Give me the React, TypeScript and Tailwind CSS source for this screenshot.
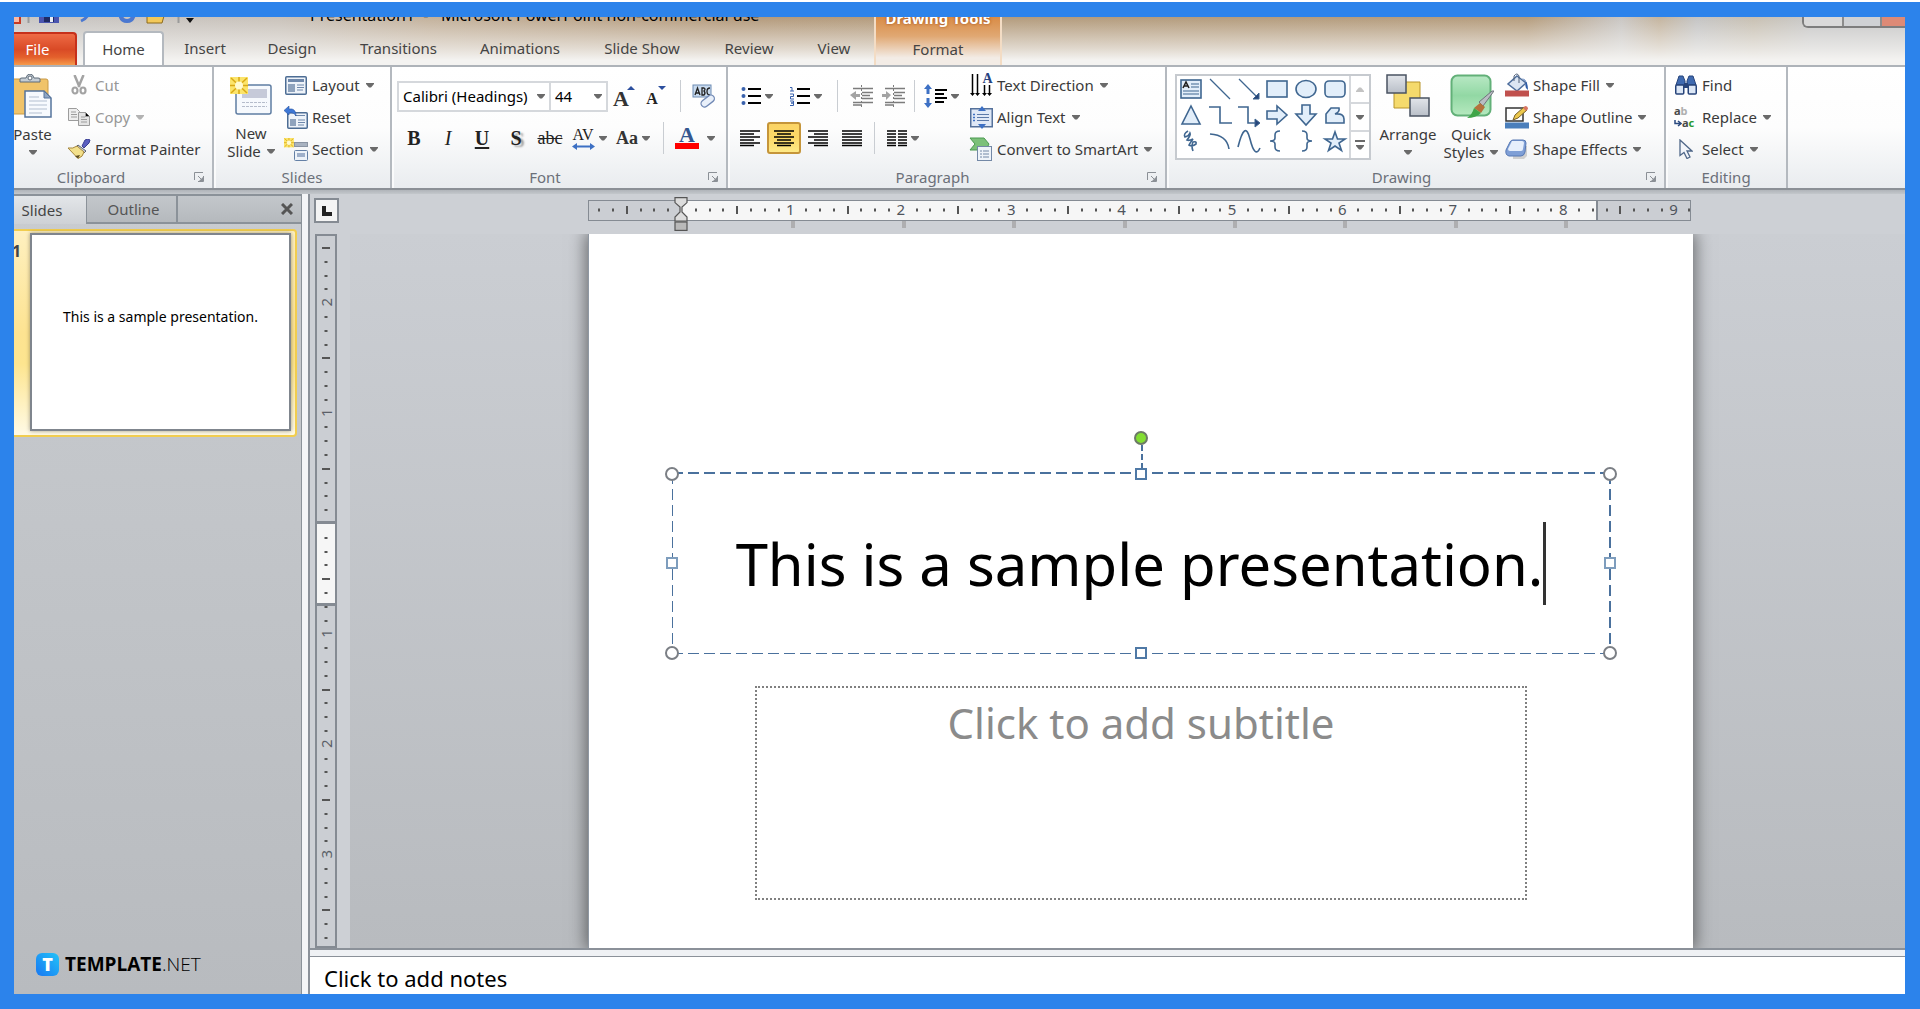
import { clsx } from 'clsx';
import type { ReactNode } from 'react';

const tabs = [
  { label: 'Insert', width: 'w-[82px]' },
  { label: 'Design', width: 'w-[92px]' },
  { label: 'Transitions', width: 'w-[121px]' },
  { label: 'Animations', width: 'w-[122px]' },
  { label: 'Slide Show', width: 'w-[122px]' },
  { label: 'Review', width: 'w-[92px]' },
  { label: 'View', width: 'w-[78px]' },
];

function Caret({ className }: { className?: string }) {
  return (
    <svg
      viewBox="0 0 8 5"
      className={clsx('h-[5px] w-2 shrink-0 fill-[#6a6a6a]', className)}
    >
      <path d="M0 0h8v1L5 4.5H3L0 1z" />
    </svg>
  );
}

function Divider({ className }: { className?: string }) {
  return (
    <div className={clsx('flex h-8 shrink-0 justify-center', className)}>
      <div className="w-px bg-[#c9cdd2]" />
    </div>
  );
}

function Group({
  label,
  width,
  launcher,
  children,
}: {
  label: string;
  width: string;
  launcher?: boolean;
  children: ReactNode;
}) {
  return (
    <section
      className={clsx(
        'flex shrink-0 flex-col border-r-2 border-[#b4b9bf] shadow-[inset_2px_0_0_#ffffffb0]',
        width
      )}
    >
      <div className="flex h-[100px]">{children}</div>
      <div className="flex h-5 items-center text-[#6b7079]">
        <h2 className="flex-1 text-center">{label}</h2>
        {launcher && (
          <button aria-label={`${label} options`} className="w-7 pl-2.5">
            <svg viewBox="0 0 10 10" className="size-[10px]" fill="none">
              <path d="M.5 8V.5H9" stroke="#8b9096" />
              <path d="M4 9.500h5.500V4M4 4l5 5" stroke="#8b9096" />
              <path d="M5 9h4V5z" fill="#8b9096" />
            </svg>
          </button>
        )}
      </div>
    </section>
  );
}

function Command({
  icon,
  label,
  caret,
  disabled,
}: {
  icon: ReactNode;
  label: string;
  caret?: boolean;
  disabled?: boolean;
}) {
  return (
    <button
      disabled={disabled}
      className={clsx(
        'flex h-8 items-center whitespace-nowrap',
        disabled ? 'text-[#979797]' : 'text-[#3a3a3a]'
      )}
    >
      <span className="mr-1 flex w-6 justify-center">{icon}</span>
      {label}
      {caret && (
        <Caret className={clsx('ml-1.5', disabled && 'opacity-50')} />
      )}
    </button>
  );
}

function ToolButton({
  label,
  width,
  caret,
  active,
  children,
}: {
  label: string;
  width: string;
  caret?: boolean;
  active?: boolean;
  children: ReactNode;
}) {
  return (
    <button
      aria-label={label}
      className={clsx(
        'flex h-8 shrink-0 items-center justify-center gap-1',
        width,
        active &&
          'rounded-[3px] border-2 border-[#c5953a] bg-[linear-gradient(#fbd465,#fdd968_50%,#fee987)]'
      )}
    >
      {children}
      {caret && <Caret />}
    </button>
  );
}

/* ---------- clipboard / slides icons ---------- */

function PasteIcon() {
  return (
    <svg viewBox="0 0 42 46" className="h-[46px] w-[42px]">
      <rect x="0" y="5" width="36" height="35" rx="2" fill="#f0c36a" stroke="#c99a46" />
      <path d="M8 8V5q0-1 2-1h4q1-4 4-4t4 4h4q2 0 2 1v3z" fill="#c4ccd4" stroke="#5c6a78" />
      <circle cx="18" cy="4" r="2" fill="#fff" stroke="#5c6a78" />
      <path d="M13 17h19l7 7v19H13z" fill="#f7fafe" stroke="#56749c" strokeWidth="1.500" />
      <path d="M32 17v7h7z" fill="#8fa6c4" stroke="#56749c" />
      <path d="M17 23h10M17 27h18M17 31h18M17 35h18M17 39h13" stroke="#b3bfd0" />
    </svg>
  );
}

function CutIcon() {
  return (
    <svg viewBox="0 0 16 20" className="h-5 w-4" fill="none" stroke="#a3a3a3">
      <path d="M3.500 0l5 12M12.500 0l-5 12" strokeWidth="2.500" />
      <ellipse cx="4" cy="15.500" rx="2.500" ry="3" strokeWidth="2.200" />
      <ellipse cx="12" cy="15.500" rx="2.500" ry="3" strokeWidth="2.200" />
    </svg>
  );
}

function CopyIcon() {
  return (
    <svg viewBox="0 0 22 18" className="h-[18px] w-[22px]" stroke="#9c9c9c">
      <path d="M.5.5h8l3 3v9h-11z" fill="#eeeeee" />
      <path d="M3 4h5M3 6.500h6M3 9h6" />
      <path d="M10.500 4.500h7l4 4v9h-11z" fill="#e4e4e4" />
      <path d="M13 9h4M13 11.500h6M13 14h6M17.500 4.500v4h4" />
    </svg>
  );
}

function PainterIcon() {
  return (
    <svg viewBox="0 0 24 20" className="h-5 w-6">
      <path d="M15 7l3-6q3-2 5 0l-1 3-5 5z" fill="#5b5fc0" stroke="#3b3f92" />
      <path d="M11 6l8 6-2 2-8-6z" fill="#c7cbd2" stroke="#5d6470" />
      <path d="M10 7l7 6q-1 5-6 6.500L1 9q5 1 9-2z" fill="#f3e08b" stroke="#a5863a" />
      <path d="M13 16l-2 3.500-3-2.500z" fill="#5b4a21" />
    </svg>
  );
}

function Sparkle() {
  return (
    <g>
      <rect width="18" height="17" fill="#fbe46b" />
      <path
        d="M9 0v17M0 8.500h18M1 1l16 15M17 1L1 16"
        stroke="#d9a916"
        strokeWidth="1.500"
      />
      <circle cx="9" cy="8.500" r="4" fill="#fffad0" />
    </g>
  );
}

function NewSlideIcon() {
  return (
    <svg viewBox="0 0 43 38" className="h-[38px] w-[43px]">
      <rect x="6" y="8" width="35" height="29" rx="2" fill="#f6f9fd" stroke="#5f7da2" strokeWidth="1.500" />
      <rect x="12" y="12" width="25" height="9" fill="#c6cad9" />
      <path d="M12 25.500h25M12 29.500h25" stroke="#b5bccb" strokeDasharray="3 1" />
      <Sparkle />
    </svg>
  );
}

function LayoutIcon() {
  return (
    <svg viewBox="0 0 22 19" className="h-[19px] w-[22px]">
      <rect x=".75" y=".75" width="20.500" height="17.500" rx="1" fill="#eef3f9" stroke="#4d6d94" strokeWidth="1.500" />
      <rect x="3" y="3" width="16" height="3" fill="#6f88ab" />
      <rect x="3" y="8" width="7" height="8" fill="#8fa3bd" />
      <path d="M12 9h7M12 11.500h7M12 14h6" stroke="#6f88ab" />
    </svg>
  );
}

function ResetIcon() {
  return (
    <svg viewBox="0 0 24 23" className="h-[23px] w-6">
      <rect x="3.750" y="6.750" width="19.500" height="15.500" rx="1" fill="#eef3f9" stroke="#4d6d94" strokeWidth="1.500" />
      <rect x="6" y="13" width="6" height="7" fill="#8fa3bd" />
      <path d="M14 14h7M14 16.500h7M14 19h6M11 9.500h10" stroke="#6f88ab" />
      <path d="M5 0v3h3q4 1 4 7-2-4-7-3v2L0 4.500z" fill="#3d77d6" stroke="#2a55a3" strokeWidth=".6" />
    </svg>
  );
}

function SectionIcon() {
  return (
    <svg viewBox="0 0 24 23" className="h-[23px] w-6">
      <g transform="scale(.55)">
        <Sparkle />
      </g>
      <rect x="10.500" y="4.500" width="13" height="4" fill="#a8b2c0" stroke="#8a94a3" />
      <rect x="10.500" y="12.500" width="13" height="10" rx="1" fill="#eef3f9" stroke="#6480a6" />
      <rect x="13" y="15" width="8" height="4" fill="#9fb0ca" />
    </svg>
  );
}

/* ---------- paragraph icons ---------- */

function BulletsIcon() {
  return (
    <svg viewBox="0 0 20 20" className="size-5">
      <g fill="#3a62ad">
        <circle cx="2.500" cy="3" r="2" />
        <circle cx="2.500" cy="10" r="2" />
        <circle cx="2.500" cy="17" r="2" />
      </g>
      <path d="M7 3h13M7 10h13M7 17h13" stroke="#000" strokeWidth="2" />
    </svg>
  );
}

function NumberingIcon() {
  return (
    <svg viewBox="0 0 21 20" className="h-5 w-[21px]" fill="none">
      <path
        d="M1 1.500h2V5M1 5h4M1 8h3.500v2.500H1.500V13H5M1 15h3.500v2H2h2.500v2.500H1"
        stroke="#3a62ad"
      />
      <path d="M8 3h13M8 10h13M8 17h13" stroke="#000" strokeWidth="2" />
    </svg>
  );
}

function IndentIcon({ dir }: { dir: 'left' | 'right' }) {
  return (
    <svg viewBox="0 0 23 22" className="h-[22px] w-[23px]">
      <path
        d="M3 3.500h20M12 7.500h11M12 10.500h8M12 13.500h11M3 17.500h20M3 20h9"
        stroke="#7c7c7c"
        strokeWidth="1.500"
      />
      <path d="M11.500 0v22" stroke="#7c7c7c" strokeDasharray="2 2" />
      {dir === 'left' ? (
        <path d="M0 10l6-4v3h4v3H6v3z" fill="#a3a3a3" />
      ) : (
        <path d="M9 10L4 6v3H0v3h4v3z" fill="#a3a3a3" />
      )}
    </svg>
  );
}

function LineSpacingIcon() {
  return (
    <svg viewBox="0 0 23 24" className="h-6 w-[23px]">
      <path d="M4 0l4 5H5.500v5h-3V5H0zM4 24l4-5H5.500v-5h-3v5H0z" fill="#3d70c4" />
      <path d="M11 6h12M11 10h9M11 14h12M11 18h9" stroke="#000" strokeWidth="2" />
    </svg>
  );
}

const alignPaths = {
  left: 'M0 1h20M0 4h14M0 7h20M0 10h14M0 13h20M0 15.500h14',
  center: 'M0 1h20M3 4h14M0 7h20M3 10h14M0 13h20M3 15.500h14',
  right: 'M0 1h20M6 4h14M0 7h20M6 10h14M0 13h20M6 15.500h14',
  justify: 'M0 1h20M0 4h20M0 7h20M0 10h20M0 13h20M0 15.500h20',
  columns:
    'M0 1h9M0 4h9M0 7h9M0 10h9M0 13h9M0 15.500h9M11 1h9M11 4h9M11 7h9M11 10h9M11 13h9M11 15.500h9',
};

function AlignIcon({ type }: { type: keyof typeof alignPaths }) {
  return (
    <svg viewBox="0 0 20 17" className="h-[17px] w-5 shrink-0">
      <path d={alignPaths[type]} stroke="#000" strokeWidth="1.600" />
    </svg>
  );
}

function TextDirectionIcon() {
  return (
    <span className="relative">
      <svg viewBox="0 0 23 23" className="h-[23px] w-[23px]" stroke="#000">
        <path d="M2.500 0v20M7.500 0v20M14.500 11v9M19.500 11v9" strokeWidth="1.500" />
        <path d="M0 19h5l-2.500 3zM5 19h5l-2.500 3zM12 19h5l-2.500 3zM17 19h5l-2.500 3z" strokeWidth="0" />
      </svg>
      <span className="absolute -top-px right-0 font-[Liberation_Serif,serif] text-sm/3 font-bold text-[#27427f]">
        A
      </span>
    </span>
  );
}

function AlignTextIcon() {
  return (
    <svg viewBox="0 0 23 23" className="h-[23px] w-[23px]">
      <rect x=".75" y="2.750" width="21.500" height="18" fill="#dfe8f6" stroke="#55719b" strokeWidth="1.500" />
      <path d="M3 8.500h2M3 11.500h2M3 14.500h2" stroke="#3d70c4" strokeWidth="1.500" />
      <path d="M7 8.500h12M7 11.500h12M7 14.500h12" stroke="#5b79a8" />
      <path d="M12 0l4 5H8zM12 23l4-5H8z" fill="#3d70c4" />
    </svg>
  );
}

function SmartArtIcon() {
  return (
    <svg viewBox="0 0 24 24" className="size-6">
      <path d="M1 1h14l5 6-3 6H1l5-6z" fill="#7cc07a" stroke="#4b9a50" />
      <rect x="8.500" y="9.500" width="14" height="14" fill="#eef3f9" stroke="#7388a6" />
      <path d="M11 14h2M11 17h2M11 20h2M14 14h6M14 17h6M14 20h6" stroke="#7388a6" />
    </svg>
  );
}

/* ---------- drawing icons ---------- */

const shapes = [
  {
    label: 'Text Box',
    art: (
      <>
        <rect x="1" y="1" width="20" height="18" />
        <path d="M11 5h8M11 8h8M3 12h16M3 15h16" strokeWidth="1" />
        <path d="M3 9l3-6 3 6M4 7h4" stroke="#222" />
      </>
    ),
  },
  { label: 'Line', art: <path d="M1 0l20 20" strokeWidth="1.200" /> },
  {
    label: 'Arrow',
    art: (
      <>
        <path d="M1 0l18 18" strokeWidth="1.200" />
        <path d="M21 14v6h-6z" fill="#26457a" strokeWidth="1" />
      </>
    ),
  },
  { label: 'Rectangle', art: <rect x="1" y="2" width="20" height="16" /> },
  { label: 'Oval', art: <ellipse cx="11" cy="10" rx="10" ry="8.500" /> },
  { label: 'Rounded', art: <rect x="1" y="2" width="20" height="16" rx="4" /> },
  { label: 'Triangle', art: <path d="M11 1l9 18H2z" /> },
  { label: 'Elbow', art: <path d="M0 2h11v16h12" fill="none" /> },
  {
    label: 'Elbow Arrow',
    art: (
      <>
        <path d="M0 2h10v16h8" fill="none" />
        <path d="M17 14l5 4-5 4z" fill="#26457a" strokeWidth="1" />
      </>
    ),
  },
  { label: 'Right Arrow', art: <path d="M1 6h10V1l10 9-10 9v-5H1z" /> },
  { label: 'Down Arrow', art: <path d="M7 0h8v9h6l-10 11L1 9h6z" /> },
  {
    label: 'Freeform',
    art: <path d="M2 18V9l5-6h8q1 4-4 6 9-1 9 5v4z" />,
  },
  {
    label: 'Scribble',
    art: (
      <path
        d="M8 0q-5 3-3 6 4-1 5-4 1 2-3 7 2 1 6-1-3 4-4 6 3 2 7-1 1-3-3-2-2 4 0 9"
        fill="none"
      />
    ),
  },
  { label: 'Arc', art: <path d="M1 3q17 1 19 15" fill="none" /> },
  {
    label: 'Curve',
    art: <path d="M0 16Q7-12 12 8t10 9" fill="none" />,
  },
  {
    label: 'Left Brace',
    art: <path d="M14 0q-5 0-5 4v3q0 3-5 3 5 0 5 3v3q0 4 5 4" fill="none" />,
  },
  {
    label: 'Right Brace',
    art: <path d="M7 0q5 0 5 4v3q0 3 5 3-5 0-5 3v3q0 4-5 4" fill="none" />,
  },
  {
    label: 'Star',
    art: <path d="M11 1l2.500 7H21l-6 4 2.500 7.500L11 15l-6.500 4.500L7 12 1 8h7.500z" />,
  },
];

function ArrangeIcon() {
  return (
    <svg viewBox="0 0 45 44" className="h-11 w-[45px]">
      <defs>
        <linearGradient id="tile" x2="0" y2="1">
          <stop stopColor="#e2e5ea" />
          <stop offset="1" stopColor="#b9bfc8" />
        </linearGradient>
      </defs>
      <path d="M8 8h26v26H8z" fill="#f5da6c" stroke="#b8942b" />
      <rect x="1" y="1" width="19" height="18" fill="url(#tile)" stroke="#4a5362" strokeWidth="1.500" />
      <rect x="24" y="24" width="19" height="18" fill="url(#tile)" stroke="#4a5362" strokeWidth="1.500" />
    </svg>
  );
}

function QuickStylesIcon() {
  return (
    <svg viewBox="0 0 45 44" className="h-11 w-[45px]">
      <defs>
        <linearGradient id="green" x2="0" y2="1">
          <stop stopColor="#b8e8c4" />
          <stop offset=".5" stopColor="#92d8a4" />
          <stop offset="1" stopColor="#b6e9bf" />
        </linearGradient>
      </defs>
      <rect x="2.500" y="1.500" width="39" height="40" rx="6" fill="url(#green)" stroke="#62b078" strokeWidth="2" />
      <path d="M45 17L34 32l-4-4L43 17z" fill="#b9bdc3" stroke="#6f747c" />
      <path d="M31 29l5 4-4 6-7-5z" fill="#b5713c" />
      <path d="M25 34l7 5q-5 5-14 5 5-3 7-10z" fill="#3fa548" />
    </svg>
  );
}

function FillIcon() {
  return (
    <svg viewBox="0 0 24 24" className="size-6">
      <path d="M12 3l9 7-9 8-9-7z" fill="#dbe5f3" stroke="#4d6d9c" strokeWidth="1.500" />
      <path d="M9 8V3q3-4 5 0v7" fill="none" stroke="#53627a" />
      <path d="M17 5q6 2 6 12-4-2-2-8z" fill="#2c5ba8" />
      <rect y="17.500" width="24" height="6" fill="#c0504d" />
    </svg>
  );
}

function OutlineIcon() {
  return (
    <svg viewBox="0 0 24 24" className="size-6">
      <path d="M1 3h17v13H1z" fill="#fff" stroke="#333" strokeWidth="1.500" />
      <path d="M8 15l2-5 9-8 3 3-9 8z" fill="#ecc84c" stroke="#77602a" />
      <path d="M18 3l2-2q3 0 3 3l-2 2z" fill="#d77463" />
      <rect y="17.500" width="24" height="6" fill="#4a7ebb" />
    </svg>
  );
}

function EffectsIcon() {
  return (
    <svg viewBox="0 0 24 20" className="h-5 w-6">
      <path d="M8 7h14v10l-3 3H8z" fill="#cfcfcf" />
      <path d="M5 3q1-2 3-2h10q3 0 3 3l-1 9q-1 4-4 4H4q-4-1-3-6z" fill="#7f9fd6" stroke="#5678b4" />
      <path d="M7 2h10q2 0 2 2l-1 6q0 2-2 2H5q-2 0-2-2z" fill="#e6effc" />
    </svg>
  );
}

/* ---------- editing icons ---------- */

function FindIcon() {
  return (
    <svg viewBox="0 0 22 20" className="h-5 w-[22px]">
      <path d="M4 1h4l2 5v4H1zM14 1h4l3 9h-9V6z" fill="#3f6ab0" stroke="#27447a" />
      <rect x=".75" y="10" width="8" height="9" rx="1" fill="#dce7f6" stroke="#27447a" strokeWidth="1.500" />
      <rect x="13.250" y="10" width="8" height="9" rx="1" fill="#dce7f6" stroke="#27447a" strokeWidth="1.500" />
      <path d="M9 8h4v5H9z" fill="#27447a" />
    </svg>
  );
}

function ReplaceIcon() {
  return (
    <span className="flex w-6 flex-col text-[11px]/[12px] font-bold">
      <span className="flex">
        <span className="text-[#4a4a4a]">a</span>
        <span className="text-[#b0b0b0]">b</span>
      </span>
      <span className="flex items-center">
        <svg viewBox="0 0 8 7" className="h-[7px] w-2 shrink-0" fill="none" stroke="#2b4a80">
          <path d="M1 0v3.500h5M4 1l3 2.500L4 6" strokeWidth="1.500" />
        </svg>
        <span className="text-[#4a4a4a]">a</span>
        <span className="text-[#2a9a34]">c</span>
      </span>
    </span>
  );
}

function SelectIcon() {
  return (
    <svg viewBox="0 0 14 20" className="h-5 w-[14px]">
      <path d="M1 1l12 11H8l3 6-3 1.500-3-6-4 3z" fill="#f2f5fa" stroke="#4f6788" strokeWidth="1.300" />
    </svg>
  );
}

/* ---------- rulers ---------- */

const INCH = 110.4;

function tickLength(k: number) {
  if (k % 8 === 0) return 0;
  return k % 4 === 0 ? 8 : 3;
}

function HorizontalRuler() {
  const zero = 93;
  const ticks = Array.from({ length: 80 }, (_, i) => i - 6);
  return (
    <div className="relative flex h-[21px] min-w-0 flex-1 border border-[#858b93] bg-[#cbced3]">
      <div className="w-[92px] shrink-0 border-r border-[#858b93]" />
      <div className="flex-1 bg-[#f6f6f6]" />
      <div className="w-[94px] shrink-0 border-l-2 border-[#858b93]" />
      <svg className="absolute inset-x-0 top-0 h-7 w-full">
        {ticks.map((k) => {
          const len = tickLength(k);
          const x = Math.round(zero + (k * INCH) / 8);
          return (
            len > 0 && (
              <rect key={k} x={x - 1} y={9 - len / 2} width="2" height={len} fill="#555" />
            )
          );
        })}
        {[1, 2, 3, 4, 5, 6, 7, 8, 9].map((n) => (
          <g key={n}>
            <text x={zero + n * INCH - 2} y="14" textAnchor="middle" fontSize="15" fill="#4f545c">
              {n}
            </text>
            {n < 9 && (
              <rect x={Math.round(zero + n * INCH) - 1} y="20" width="4" height="7" fill="#aeaeb0" />
            )}
          </g>
        ))}
      </svg>
      <svg viewBox="0 0 14 34" className="absolute -top-1 left-[85px] h-[34px] w-[14px]">
        <g fill="#dcdcdc" stroke="#555" strokeWidth="1.200">
          <path d="M1 .6h12v5L8 10v5l5 5v4H1v-4l5-5v-5L1 5.600z" />
          <rect x="1" y="25" width="12" height="8.400" fill="#b9b9b9" />
        </g>
      </svg>
    </div>
  );
}

function VerticalRuler() {
  const zero = 289;
  const ticks = Array.from({ length: 51 }, (_, i) => i - 20);
  return (
    <div className="relative w-[22px] overflow-hidden border-2 border-[#858b93] bg-[#cbced3]">
      <svg className="absolute inset-0 h-full w-full">
        <rect y={zero - 2} width="22" height="82" fill="#f6f6f6" />
        <rect y={zero - 4} width="22" height="3" fill="#858b93" />
        <rect y={zero + 78} width="22" height="3" fill="#858b93" />
        {ticks.map((k) => {
          const len = tickLength(k);
          const y = Math.round(zero + (k * INCH) / 8) - 2;
          return (
            len > 0 && (
              <rect key={k} x={9 - len / 2} y={y} width={len} height="2" fill="#555" />
            )
          );
        })}
        {[-2, -1, 1, 2, 3].map((n) => {
          const y = zero + n * INCH - 2;
          return (
            <text
              key={n}
              x="15"
              y={y}
              transform={`rotate(-90 15 ${y})`}
              textAnchor="middle"
              fontSize="15"
              fill="#5b6068"
            >
              {Math.abs(n)}
            </text>
          );
        })}
      </svg>
    </div>
  );
}

/* ---------- page parts ---------- */

function TitleBar() {
  return (
    <header className="relative flex h-[50px] shrink-0 flex-col overflow-hidden border-b-2 border-[#aeb3b9] bg-[linear-gradient(to_bottom,#f4f3f100,#f4f3f1b0_65%,#f4f3f1_90%),linear-gradient(to_right,#c8c6c4,#c9c2ba_14%,#c3b19b_22%,#b49a7b_38%,#b39b7c_50%,#b59c7c_80%,#c9c6c3_85%,#c4b49e_87%,#c4c4c4_89%,#c8c0b2_92%,#c8c8c8_95%)]">
      <div className="-mt-3.5 flex h-6 shrink-0 items-center">
        <div className="flex w-[296px] shrink-0 items-center">
          <svg viewBox="0 0 190 24" className="h-6 w-[190px]">
            <rect x="-10" y="4" width="16" height="16" fill="#fbb9a4" stroke="#c73a24" strokeWidth="2" />
            <path d="M14.500 4v16M164.500 4v16" stroke="#9a9a9a" strokeWidth="2" />
            <rect x="25" y="0" width="20" height="20" fill="#4a55b0" />
            <rect x="30" y="14" width="10" height="5" fill="#1e2a63" />
            <rect x="36" y="14" width="3" height="5" fill="#e8ecf5" />
            <path d="M74 6q2 8-7 12" fill="none" stroke="#4b78d0" strokeWidth="3" />
            <path d="M106 8q0 10 7 10t7-10" fill="none" stroke="#4b78d0" strokeWidth="4" />
            <path d="M133 6h19l-4 14h-15z" fill="#f3c95a" stroke="#8c6a1d" />
            <path d="M172 15h8l-4 5z" fill="#111" />
          </svg>
        </div>
        <h1 className="whitespace-nowrap text-base text-black">
          Presentation1 &nbsp;-&nbsp; &nbsp;Microsoft PowerPoint non-commercial use
        </h1>
        <div className="mt-1.5 ml-auto flex h-5 w-[103px] shrink-0 overflow-hidden rounded-bl-md border-b-2 border-l-2 border-[#7d7d7d]">
          <button aria-label="Minimize" className="w-10 border-r-2 border-[#8c8c8c] bg-[#d9d9d9]" />
          <button aria-label="Maximize" className="w-[38px] border-r-2 border-[#8c8c8c] bg-[#cfd1d4]" />
          <button aria-label="Close" className="flex-1 bg-[#dd8a76]" />
        </div>
      </div>
      <nav className="mt-[5px] flex h-[33px] shrink-0 items-center text-[#444]">
        <button className="h-[33px] w-[63px] rounded-tr border-t-2 border-r-2 border-[#c6301b] bg-[linear-gradient(#ee6a45,#d94a26_50%,#e4602c_75%,#f59a4c)] pr-3.5 text-white">
          File
        </button>
        <button className="z-10 ml-1.5 h-[35px] w-[81px] rounded-t border-2 border-b-0 border-[#b4b9bf] bg-white">
          Home
        </button>
        {tabs.map((tab) => (
          <button key={tab.label} className={clsx('h-8', tab.width)}>
            {tab.label}
          </button>
        ))}
      </nav>
      <div className="absolute top-0 left-[860px] flex h-12 w-32 flex-col items-center border-x-2 border-[#f3dcc4] bg-[linear-gradient(#d98b45,#e0a873_40%,#f3ece6_85%)]">
        <span className="-mt-[11px] leading-6 font-bold whitespace-nowrap text-white [text-shadow:0_0_3px_#a04d16]">
          Drawing Tools
        </span>
        <button className="mt-2 text-[#444]">Format</button>
      </div>
    </header>
  );
}

function FontGroup() {
  return (
    <Group label="Font" width="w-[336px]" launcher>
      <div className="flex flex-col gap-2.5 pt-[13px] pl-[5px]">
        <div className="flex h-8 items-center">
          <div className="relative">
            <select
              aria-label="Font"
              className="h-[31px] w-[154px] appearance-none overflow-hidden border-2 border-[#d5d8dc] bg-white pr-5 pl-1 text-black"
            >
              <option>Calibri (Headings)</option>
            </select>
            <Caret className="absolute top-[13px] right-1.5" />
          </div>
          <div className="relative">
            <select
              aria-label="Font size"
              className="-ml-0.5 h-[31px] w-[59px] appearance-none border-2 border-[#d5d8dc] bg-white pl-1 text-black"
            >
              <option>44</option>
            </select>
            <Caret className="absolute top-[13px] right-1.5" />
          </div>
          <ToolButton label="Grow Font" width="w-8">
            <span className="-mr-1 pt-1 font-[Liberation_Serif,serif] text-[22px] font-bold text-[#333]">A</span>
            <svg viewBox="0 0 8 4" className="-ml-0.5 mb-4 h-1 w-2">
              <path d="M4 0l4 4H0z" fill="#2c4f9e" />
            </svg>
          </ToolButton>
          <ToolButton label="Shrink Font" width="w-8">
            <span className="-mr-1 pt-1.5 font-[Liberation_Serif,serif] text-base font-bold text-[#222]">A</span>
            <svg viewBox="0 0 8 4" className="mb-4 h-1 w-2">
              <path d="M0 0h8L4 4z" fill="#2c4f9e" />
            </svg>
          </ToolButton>
          <Divider className="w-4" />
          <ToolButton label="Clear Formatting" width="w-8">
            <svg viewBox="0 0 24 24" className="size-6">
              <rect x="1" y="1" width="18" height="12" fill="#c9dbef" stroke="#6c8bb3" />
              <path d="M3 11l2.500-7L8 11M4 9h3M10 4v7h2q2-2 0-4 2-2 0-3zM18 4q-3 0-3 3.500t3 3.500" fill="none" stroke="#222" strokeWidth="1.300" />
              <rect x="8" y="14" width="15" height="7" rx="3.500" transform="rotate(-38 15 17)" fill="#e9f0fa" stroke="#7189b5" strokeWidth="1.300" />
            </svg>
          </ToolButton>
        </div>
        <div className="flex h-8 items-center font-[Liberation_Serif,serif] text-xl text-[#222]">
          <ToolButton label="Bold" width="w-[34px]">
            <b>B</b>
          </ToolButton>
          <ToolButton label="Italic" width="w-[34px]">
            <i>I</i>
          </ToolButton>
          <ToolButton label="Underline" width="w-[34px]">
            <b className="underline decoration-2 underline-offset-2">U</b>
          </ToolButton>
          <ToolButton label="Shadow" width="w-[34px]">
            <b className="[text-shadow:3px_2px_2px_#999]">S</b>
          </ToolButton>
          <ToolButton label="Strikethrough" width="w-[34px]">
            <s className="text-lg">abc</s>
          </ToolButton>
          <ToolButton label="Character Spacing" width="w-11" caret>
            <span className="flex flex-col items-center">
              <span className="text-base/4">AV</span>
              <svg viewBox="0 0 23 7" className="h-[7px] w-[23px]">
                <path d="M0 3.500L5 0v2.500h13V0l5 3.500L18 7V4.500H5V7z" fill="#3d70c4" />
              </svg>
            </span>
          </ToolButton>
          <ToolButton label="Change Case" width="w-11" caret>
            <span className="text-lg font-bold text-[#333]">Aa</span>
          </ToolButton>
          <Divider className="w-4" />
          <ToolButton label="Font Color" width="w-12" caret>
            <span className="mr-1 flex w-6 flex-col items-center">
              <b className="text-[22px]/[16px] text-[#34578f]">A</b>
              <span className="h-1.5 w-6 bg-[#ff0000]" />
            </span>
          </ToolButton>
        </div>
      </div>
    </Group>
  );
}

function ParagraphGroup() {
  return (
    <Group label="Paragraph" width="w-[439px]" launcher>
      <div className="flex w-[241px] shrink-0 flex-col gap-2.5 pt-[13px] pl-[5px]">
        <div className="flex items-center">
          <ToolButton label="Bullets" width="w-12" caret>
            <BulletsIcon />
          </ToolButton>
          <ToolButton label="Numbering" width="w-12" caret>
            <NumberingIcon />
          </ToolButton>
          <Divider className="w-4" />
          <ToolButton label="Decrease Indent" width="w-8">
            <IndentIcon dir="left" />
          </ToolButton>
          <ToolButton label="Increase Indent" width="w-8">
            <IndentIcon dir="right" />
          </ToolButton>
          <Divider className="w-2.5" />
          <ToolButton label="Line Spacing" width="w-11" caret>
            <LineSpacingIcon />
          </ToolButton>
        </div>
        <div className="flex items-center">
          <ToolButton label="Align Left" width="w-[34px]">
            <AlignIcon type="left" />
          </ToolButton>
          <ToolButton label="Center" width="w-[34px]" active>
            <AlignIcon type="center" />
          </ToolButton>
          <ToolButton label="Align Right" width="w-[34px]">
            <AlignIcon type="right" />
          </ToolButton>
          <ToolButton label="Justify" width="w-[34px]">
            <AlignIcon type="justify" />
          </ToolButton>
          <Divider className="w-2.5" />
          <ToolButton label="Columns" width="w-12" caret>
            <AlignIcon type="columns" />
          </ToolButton>
        </div>
      </div>
      <div className="flex flex-col pt-0.5">
        <Command icon={<TextDirectionIcon />} label="Text Direction" caret />
        <Command icon={<AlignTextIcon />} label="Align Text" caret />
        <Command icon={<SmartArtIcon />} label="Convert to SmartArt" caret />
      </div>
    </Group>
  );
}

function DrawingGroup() {
  return (
    <Group label="Drawing" width="w-[499px]" launcher>
      <div className="mt-[7px] ml-2 flex h-[86px] w-[196px] shrink-0 border-2 border-[#c6cacf] bg-white">
        <div className="grid flex-1 grid-cols-6 grid-rows-3 place-items-center pb-1">
          {shapes.map((shape) => (
            <button key={shape.label} aria-label={shape.label}>
              <svg viewBox="0 0 22 20" className="h-5 w-[22px] overflow-visible" fill="#e2eefa" stroke="#3f6690" strokeWidth="1.600">
                {shape.art}
              </svg>
            </button>
          ))}
        </div>
        <div className="flex w-5 flex-col divide-y-2 divide-[#d5d8dc] border-l-2 border-[#d5d8dc]">
          <button aria-label="Previous shapes" className="flex flex-1 items-center justify-center">
            <Caret className="rotate-180 opacity-40" />
          </button>
          <button aria-label="Next shapes" className="flex flex-1 items-center justify-center">
            <Caret />
          </button>
          <button aria-label="More shapes" className="flex flex-1 flex-col items-center justify-center gap-[3px]">
            <span className="h-0.5 w-2.5 bg-[#6a6a6a]" />
            <Caret />
          </button>
        </div>
      </div>
      <button className="ml-0.5 flex w-[70px] shrink-0 flex-col items-center pt-[7px] text-[#3a3a3a]">
        <ArrangeIcon />
        <span className="mt-1.5 leading-5">Arrange</span>
        <Caret className="mt-1.5" />
      </button>
      <button className="flex w-14 shrink-0 flex-col items-center pt-[7px] text-[#3a3a3a]">
        <QuickStylesIcon />
        <span className="mt-1.5 leading-5">Quick</span>
        <span className="flex items-center gap-1.5 leading-4">
          Styles <Caret />
        </span>
      </button>
      <div className="ml-1.5 flex flex-col pt-0.5">
        <Command icon={<FillIcon />} label="Shape Fill" caret />
        <Command icon={<OutlineIcon />} label="Shape Outline" caret />
        <Command icon={<EffectsIcon />} label="Shape Effects" caret />
      </div>
    </Group>
  );
}

function Ribbon() {
  return (
    <div className="flex h-[123px] shrink-0 overflow-hidden border-b-2 border-[#8b9096] bg-[linear-gradient(#fff,#fdfdfd_50%,#e9ecef)]">
      <Group label="Clipboard" width="-ml-4 w-[216px]" launcher>
        <button className="flex w-[69px] shrink-0 flex-col items-center pt-[7px] text-[#3a3a3a]">
          <PasteIcon />
          <span className="mt-1 leading-5">Paste</span>
          <Caret className="mt-1.5" />
        </button>
        <div className="flex flex-col pt-0.5">
          <Command icon={<CutIcon />} label="Cut" disabled />
          <Command icon={<CopyIcon />} label="Copy" caret disabled />
          <Command icon={<PainterIcon />} label="Format Painter" />
        </div>
      </Group>
      <Group label="Slides" width="w-[178px]">
        <button className="flex w-[70px] shrink-0 flex-col items-center pt-2.5 pl-1 text-[#3a3a3a]">
          <NewSlideIcon />
          <span className="mt-2 leading-5">New</span>
          <span className="flex items-center gap-1.5 leading-4">
            Slide <Caret />
          </span>
        </button>
        <div className="flex flex-col pt-0.5">
          <Command icon={<LayoutIcon />} label="Layout" caret />
          <Command icon={<ResetIcon />} label="Reset" />
          <Command icon={<SectionIcon />} label="Section" caret />
        </div>
      </Group>
      <FontGroup />
      <ParagraphGroup />
      <DrawingGroup />
      <Group label="Editing" width="w-[122px]">
        <div className="flex flex-col pt-0.5 pl-2">
          <Command icon={<FindIcon />} label="Find" />
          <Command icon={<ReplaceIcon />} label="Replace" caret />
          <Command icon={<SelectIcon />} label="Select" caret />
        </div>
      </Group>
    </div>
  );
}

function SlidesPane() {
  return (
    <aside className="flex w-[288px] shrink-0 flex-col border-r border-[#8b9299] bg-[linear-gradient(#c9ccd0,#b8bbbf)]">
      <div className="flex h-[30px] shrink-0 border-t-2 border-[#8b9299] bg-[linear-gradient(#c3c7cb,#b4b8bc)] text-[#555]">
        <button className="w-[73px] border-r border-[#8b9299] bg-[linear-gradient(#e3e6e9,#ced1d5)] pr-4 text-[#444]">
          Slides
        </button>
        <button className="w-[91px] border-r-2 border-b-2 border-[#8b9299] pl-1">Outline</button>
        <div className="flex flex-1 items-center justify-end border-b-2 border-[#8b9299] pr-2">
          <button aria-label="Close pane">
            <svg viewBox="0 0 12 12" className="size-3" stroke="#555" strokeWidth="3">
              <path d="M1 1l10 10M11 1L1 11" />
            </svg>
          </button>
        </div>
      </div>
      <div className="mt-[5px] mr-1 flex h-[208px] shrink-0 rounded-r border-2 border-l-0 border-[#f1cd4f] bg-[linear-gradient(#fef0c0,#fde391_50%,#fde58f_65%,#fffae6)] pt-0.5">
        <span className="w-4 shrink-0 pt-1.5 text-base/6 font-bold text-[#444]">
          <span className="-ml-0.5">1</span>
        </span>
        <div className="flex h-[198px] w-[261px] items-start justify-center border-2 border-[#7f858d] bg-white pt-[72px] text-sm whitespace-nowrap text-black shadow-[0_0_4px_#00000060]">
          This is a sample presentation.
        </div>
      </div>
      <div className="mt-auto mb-[18px] ml-[22px] flex items-center">
        <span className="flex size-[23px] items-center justify-center rounded-md bg-[linear-gradient(45deg,#1877f2,#22c3f8)] font-[Open_Sans,sans-serif] text-lg/5 font-extrabold text-white">
          T
        </span>
        <span className="ml-1.5 font-[Open_Sans,sans-serif] text-[19px]/6 text-black">
          <b>TEMPLATE</b>
          <span className="font-light">.NET</span>
        </span>
      </div>
    </aside>
  );
}

const handles = [
  'rounded-full border-[#7b7f85] size-[14px] -top-[6px] -left-[7px]',
  'rounded-full border-[#7b7f85] size-[14px] -top-[6px] -right-[7px]',
  'rounded-full border-[#7b7f85] size-[14px] -bottom-[7px] -left-[7px]',
  'rounded-full border-[#7b7f85] size-[14px] -bottom-[7px] -right-[7px]',
  'border-[#4f79a6] size-3 -top-[5px] left-1/2 -ml-1.5',
  'border-[#4f79a6] size-3 -bottom-[6px] left-1/2 -ml-1.5',
  'border-[#7e9dbd] size-3 top-1/2 -mt-1.5 -left-[6px]',
  'border-[#7e9dbd] size-3 top-1/2 -mt-1.5 -right-[6px]',
];

function Slide() {
  return (
    <main className="mr-[212px] ml-[238px] flex flex-1 flex-col items-center border-l border-[#8f98a3] bg-white pt-[239px] shadow-[0_0_16px_2px_#00000080]">
      <div className="relative flex h-[180px] w-[85%] shrink-0 items-center justify-center">
        <svg
          className="absolute inset-0 h-full w-full overflow-visible"
          stroke="#4a719d"
          strokeDasharray="11 5"
          shapeRendering="crispEdges"
        >
          <line x2="100%" strokeWidth="2" />
          <line x1="100%" x2="100%" y2="100%" strokeWidth="2" />
          <line y2="100%" />
          <line x2="100%" y1="100%" y2="100%" />
        </svg>
        <div className="absolute -top-7 left-1/2 h-6 border-l-2 border-dashed border-[#4a719d]" />
        <div className="absolute -top-[42px] left-1/2 -ml-[7px] size-[14px] rounded-full border-2 border-[#6c7a66] bg-[#83de33]" />
        {handles.map((handle) => (
          <span key={handle} className={clsx('absolute border-2 bg-white', handle)} />
        ))}
        <p className="relative text-[58px] whitespace-nowrap text-black">This is a sample presentation.</p>
        <span className="h-[83px] w-[3px] shrink-0 bg-[#333]" />
      </div>
      <div className="mt-[33px] flex h-[214px] w-[70%] shrink-0 justify-center border-2 border-dotted border-[#808080] pt-2">
        <p className="text-[42px]/[54px] whitespace-nowrap text-[#8b8b8b]">Click to add subtitle</p>
      </div>
    </main>
  );
}

function Editor() {
  return (
    <div className="flex min-w-0 flex-1 flex-col border-l-2 border-[#8b9199]">
      <div className="flex h-10 shrink-0 bg-[#cdd0d5]">
        <button
          aria-label="Tab stop"
          className="mt-1 ml-1 flex size-[25px] shrink-0 items-center justify-center border-2 border-[#858b93] bg-[#f4f4f4]"
        >
          <span className="size-2.5 border-b-4 border-l-4 border-[#222]" />
        </button>
        <div className="mt-1.5 mr-[214px] ml-[249px] flex min-w-0 flex-1">
          <HorizontalRuler />
        </div>
      </div>
      <div className="flex min-h-[714px] flex-1">
        <div className="flex w-10 shrink-0 bg-[#cdd0d5] pl-[5px]">
          <VerticalRuler />
        </div>
        <div className="flex min-w-0 flex-1 overflow-hidden bg-[linear-gradient(#cbced3,#b8bbbf)]">
          <Slide />
        </div>
      </div>
      <div className="h-2 shrink-0 border-t-2 border-[#8b9199] bg-[#eff1f4]" />
      <div className="h-[38px] shrink-0 border-t border-[#8b9199] bg-white">
        <input
          aria-label="Notes"
          defaultValue="Click to add notes"
          className="h-9 w-full pt-1.5 pl-3.5 text-[22px] text-black outline-none"
        />
      </div>
    </div>
  );
}

export default function App() {
  return (
    <div className="flex min-h-screen flex-col border-t-2 border-white font-[Noto_Sans,Open_Sans,sans-serif] text-[15px]">
      <div className="flex flex-1 flex-col overflow-hidden border-[15px] border-l-[14px] border-[#2c83eb] bg-white">
        <TitleBar />
        <Ribbon />
        <div className="h-1 shrink-0 bg-[linear-gradient(#b0b4b9,#c3c7cb)]" />
        <div className="flex flex-1">
          <SlidesPane />
          <div className="w-1.5 shrink-0 bg-[#f4f5f7]" />
          <Editor />
        </div>
      </div>
    </div>
  );
}
